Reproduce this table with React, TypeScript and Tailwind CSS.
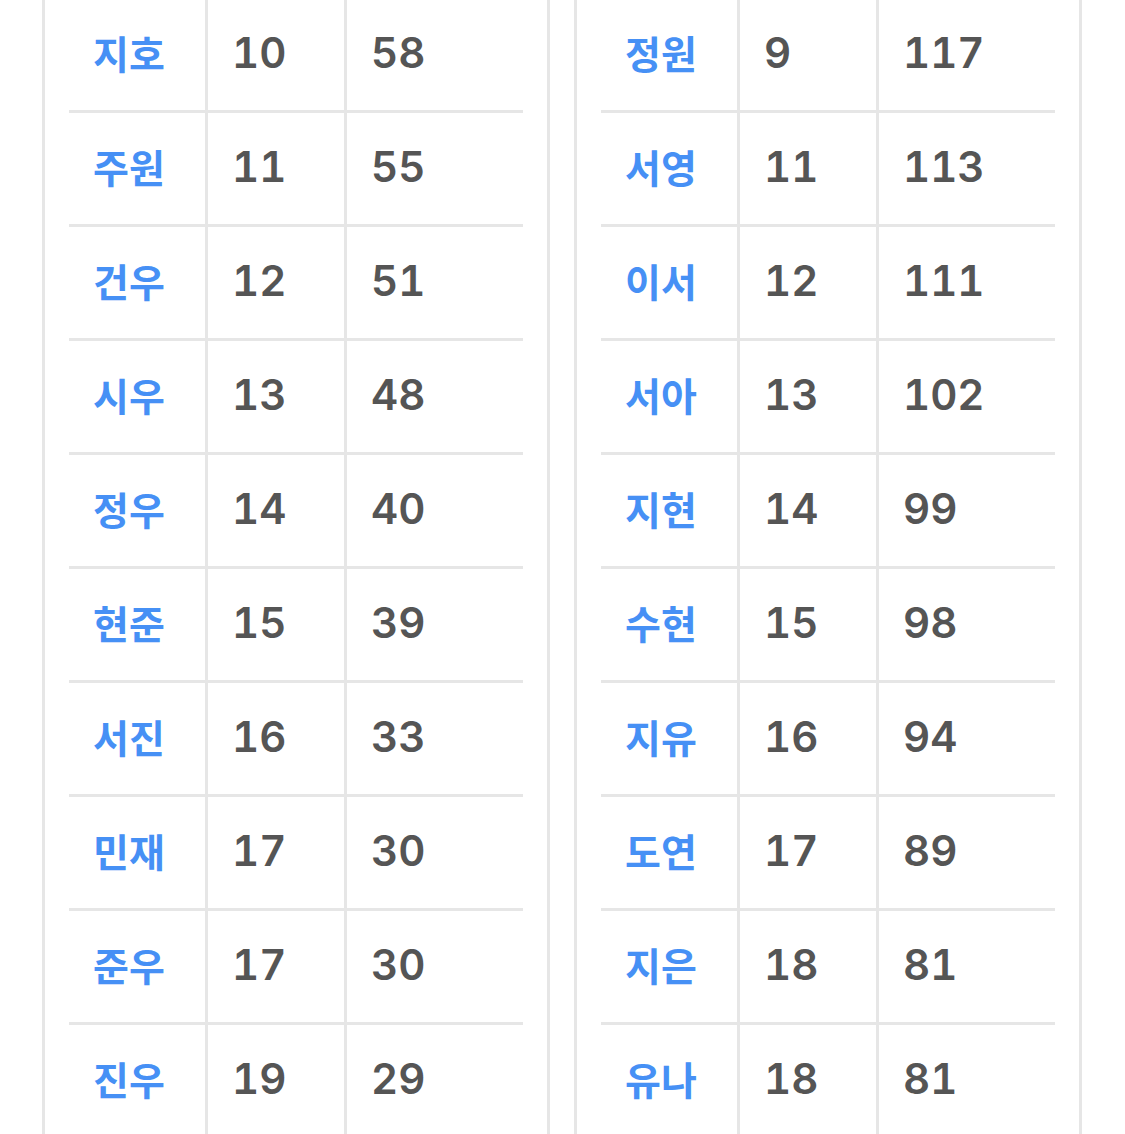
import React from "react";

type Row = { name: string; a: number; b: number };

const boys: Row[] = [
  { name: "지호", a: 10, b: 58 },
  { name: "주원", a: 11, b: 55 },
  { name: "건우", a: 12, b: 51 },
  { name: "시우", a: 13, b: 48 },
  { name: "정우", a: 14, b: 40 },
  { name: "현준", a: 15, b: 39 },
  { name: "서진", a: 16, b: 33 },
  { name: "민재", a: 17, b: 30 },
  { name: "준우", a: 17, b: 30 },
  { name: "진우", a: 19, b: 29 },
];

const girls: Row[] = [
  { name: "정원", a: 9, b: 117 },
  { name: "서영", a: 11, b: 113 },
  { name: "이서", a: 12, b: 111 },
  { name: "서아", a: 13, b: 102 },
  { name: "지현", a: 14, b: 99 },
  { name: "수현", a: 15, b: 98 },
  { name: "지유", a: 16, b: 94 },
  { name: "도연", a: 17, b: 89 },
  { name: "지은", a: 18, b: 81 },
  { name: "유나", a: 18, b: 81 },
];

// One bordered panel with its ranking table
const Panel: React.FC<{ rows: Row[] }> = ({ rows }) => (
  <div className="w-[508px] h-full border-x-[3px] border-[#e6e6e6] px-6 overflow-hidden">
    <div className="-mt-px">
      {rows.map((r, i) => (
        <div key={i} className="flex h-[114px] border-b-[3px] border-[#e6e6e6]">
          <div className="w-[136px] pl-6 pb-1 flex items-center text-[39px] font-semibold text-[#4690f5] [font-family:'Noto_Sans_CJK_KR',sans-serif]">
            {r.name}
          </div>
          <div className="w-[139px] pl-6 pb-1 flex items-center border-l-[3px] border-[#e6e6e6] text-[42px] font-semibold tabular-nums text-[#555555] [font-family:Inter,'Liberation_Sans',sans-serif]">
            {r.a}
          </div>
          <div className="flex-1 pl-6 pb-1 flex items-center border-l-[3px] border-[#e6e6e6] text-[42px] font-semibold tabular-nums text-[#555555] [font-family:Inter,'Liberation_Sans',sans-serif]">
            {r.b}
          </div>
        </div>
      ))}
    </div>
  </div>
);

const App: React.FC = () => {
  return (
    <div className="w-[1125px] h-[1134px] bg-white overflow-hidden flex gap-6 pl-[42px]">
      <Panel rows={boys} />
      <Panel rows={girls} />
    </div>
  );
};

export default App;
